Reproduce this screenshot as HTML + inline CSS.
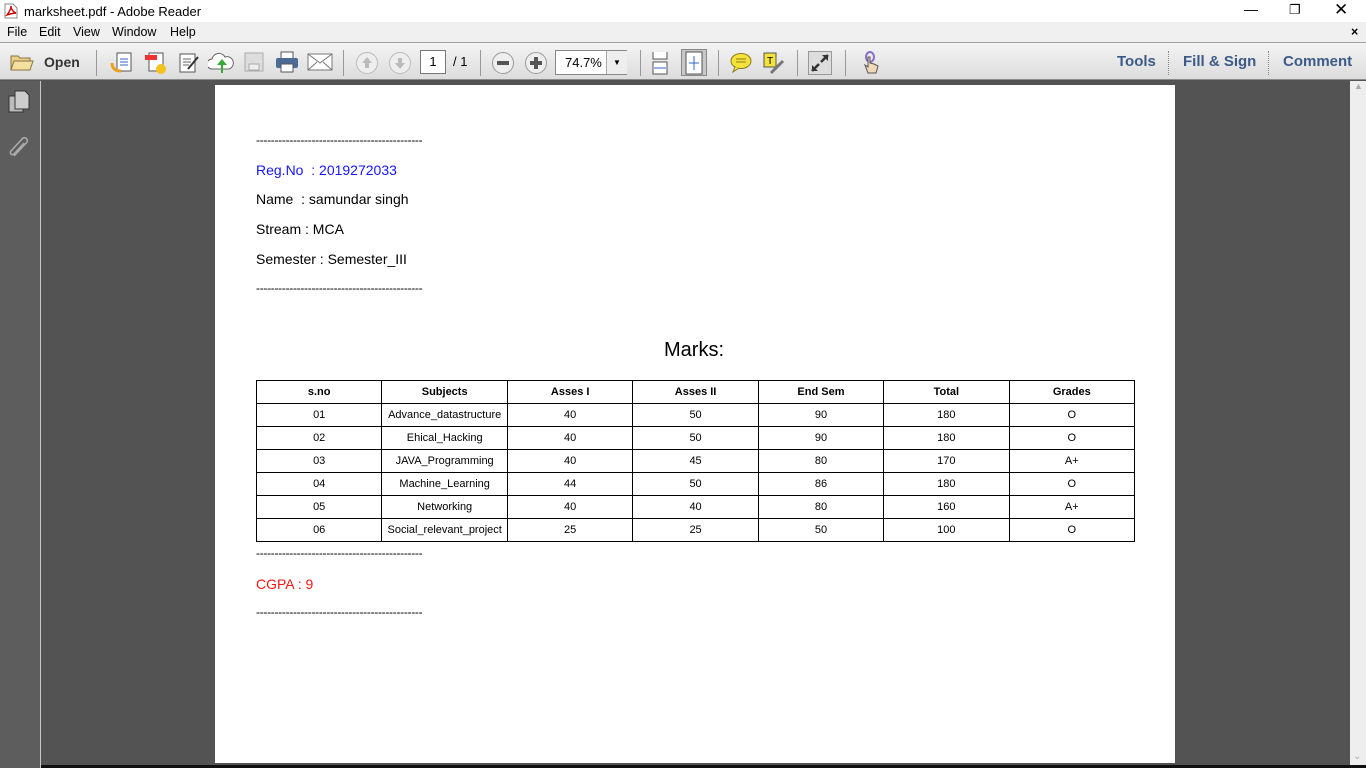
<!DOCTYPE html>
<html><head><meta charset="utf-8"><style>
*{margin:0;padding:0;box-sizing:border-box}
body{width:1366px;height:768px;overflow:hidden;font-family:"Liberation Sans",sans-serif;background:#535353;position:relative}
.abs{position:absolute}
#title{left:0;top:0;width:1366px;height:22px;background:#fff;font-size:13px;color:#000}
#menu{left:0;top:22px;width:1366px;height:20px;background:#f0f0f0;font-size:12.5px}
#menu span{position:absolute;top:3px}
#tb{left:0;top:42px;width:1366px;height:38px;background:linear-gradient(#f4f4f4,#dcdcdc);border-top:1px solid #a0a0a0;border-bottom:1px solid #8a8a8a}
.sep{position:absolute;top:7px;width:1px;height:26px;background:#999}
.ic{position:absolute}
#left{left:0;top:81px;width:41px;height:687px;background:#5d5d5d;border-right:1px solid #c8c8c8}
#page{left:215px;top:85px;width:960px;height:678px;background:#fff}
#sb{left:1350px;top:81px;width:16px;height:684px;background:#eee}
.t{position:absolute;font-size:14px;color:#000;left:41px}
.dash{position:absolute;left:41px;font-size:12px;color:#000;letter-spacing:-0.3px}
table{position:absolute;left:41px;top:295px;border-collapse:collapse;width:879px;font-size:11px}
td{border:1px solid #000;height:23px;text-align:center;width:125.6px;padding:0}
tr:first-child td{font-weight:bold}
.r{position:absolute;font-weight:bold;font-size:15px;color:#3c5a87;top:10px}
</style></head><body>
<div id="title" class="abs">
 <svg class="abs" style="left:4px;top:3px" width="14" height="16"><path d="M1 1h8l4 4v10H1z" fill="#fff" stroke="#888"/><path d="M3 12c3-4 4-7 4-9 0 3 2 6 5 7-3 0-6 1-9 2z" fill="none" stroke="#c00" stroke-width="1.4"/></svg>
 <span class="abs" style="left:24px;top:4px">marksheet.pdf - Adobe Reader</span>
 <span class="abs" style="left:1244px;top:1px;font-size:14px">—</span>
 <span class="abs" style="left:1289px;top:2px;font-size:13px">❐</span>
 <span class="abs" style="left:1334px;top:0px;font-size:17px">✕</span>
</div>
<div id="menu" class="abs"><span style="left:7px">File</span><span style="left:39px">Edit</span><span style="left:73px">View</span><span style="left:112px">Window</span><span style="left:170px">Help</span><span style="left:1351px;font-weight:bold">×</span></div>
<div id="tb" class="abs">
 <svg class="ic" style="left:10px;top:9px" width="24" height="20"><path d="M1 4h7l2 2h10v12H1z" fill="#e9cf88" stroke="#8a7440"/><path d="M1 18l3-9h19l-3 9z" fill="#f3dfa0" stroke="#8a7440"/></svg>
 <span class="abs" style="left:44px;top:11px;font-weight:bold;font-size:14px;color:#333">Open</span>
 <div class="sep" style="left:96px"></div>
 <svg class="ic" style="left:110px;top:8px" width="24" height="24"><rect x="7" y="2" width="14" height="18" fill="#fff" stroke="#555"/><path d="M10 8h8M10 11h8M10 14h8" stroke="#36c"/><path d="M2 12c0 6 4 8 9 8" stroke="#e8a21c" stroke-width="3" fill="none"/></svg>
 <svg class="ic" style="left:144px;top:8px" width="24" height="24"><rect x="5" y="2" width="14" height="18" fill="#fff" stroke="#555"/><rect x="1" y="4" width="12" height="5" fill="#e33"/><circle cx="17" cy="18" r="5" fill="#f3c21c"/></svg>
 <svg class="ic" style="left:178px;top:8px" width="24" height="24"><rect x="2" y="3" width="15" height="18" fill="#fff" stroke="#555"/><path d="M5 8h8M5 11h8M5 14h6" stroke="#666"/><path d="M10 18l10-12" stroke="#333" stroke-width="2"/></svg>
 <svg class="ic" style="left:208px;top:8px" width="26" height="24"><path d="M4 18a5 5 0 010-10 7 7 0 0113-2 5 5 0 014 12z" fill="#fff" stroke="#666"/><path d="M13 22v-8h-4l5-6 5 6h-4v8z" fill="#3a3"/></svg>
 <svg class="ic" style="left:244px;top:9px" width="20" height="20"><rect x="1" y="1" width="18" height="18" fill="#ddd" stroke="#aaa"/><rect x="5" y="12" width="10" height="6" fill="#eee" stroke="#aaa"/></svg>
 <svg class="ic" style="left:275px;top:8px" width="24" height="22"><rect x="6" y="1" width="12" height="7" fill="#fff" stroke="#555"/><rect x="1" y="7" width="22" height="10" rx="2" fill="#4c6b96"/><rect x="6" y="13" width="12" height="8" fill="#fff" stroke="#555"/></svg>
 <svg class="ic" style="left:307px;top:10px" width="26" height="18"><rect x="1" y="1" width="24" height="16" fill="#fff" stroke="#777"/><path d="M1 1l12 9 12-9M1 17l9-8M25 17l-9-8" stroke="#777" fill="none"/></svg>
 <div class="sep" style="left:343px"></div>
 <svg class="ic" style="left:355px;top:8px" width="24" height="24"><circle cx="12" cy="12" r="10.5" fill="#eee" stroke="#bbb"/><path d="M12 6l-5 6h3v5h4v-5h3z" fill="#bbb"/></svg>
 <svg class="ic" style="left:388px;top:8px" width="24" height="24"><circle cx="12" cy="12" r="10.5" fill="#eee" stroke="#bbb"/><path d="M12 18l-5-6h3V7h4v5h3z" fill="#bbb"/></svg>
 <div class="abs" style="left:420px;top:7px;width:26px;height:24px;background:#fff;border:1px solid #777;font-size:13px;text-align:center;line-height:22px">1</div>
 <span class="abs" style="left:453px;top:11px;font-size:13px">/ 1</span>
 <div class="sep" style="left:480px"></div>
 <svg class="ic" style="left:491px;top:8px" width="24" height="24"><circle cx="12" cy="12" r="10.5" fill="#eee" stroke="#999"/><rect x="6" y="10" width="12" height="4" fill="#555"/></svg>
 <svg class="ic" style="left:524px;top:8px" width="24" height="24"><circle cx="12" cy="12" r="10.5" fill="#eee" stroke="#999"/><path d="M6 10h4V6h4v4h4v4h-4v4h-4v-4H6z" fill="#555"/></svg>
 <div class="abs" style="left:555px;top:7px;width:72px;height:25px;background:#fff;border:1px solid #888;font-size:13px;line-height:23px;padding-left:9px">74.7%<div class="abs" style="left:50px;top:0;width:21px;height:23px;background:#eee;border-left:1px solid #aaa;font-size:8px;text-align:center">▼</div></div>
 <div class="sep" style="left:640px"></div>
 <svg class="ic" style="left:650px;top:8px" width="20" height="24"><path d="M3 1v7h14V1M3 23V11h14v12z" fill="#fff" stroke="#555"/><path d="M4 17h12" stroke="#36c"/></svg>
 <div class="abs" style="left:681px;top:6px;width:26px;height:27px;background:#c8c8c8;border:1px solid #888"></div>
 <svg class="ic" style="left:684px;top:8px" width="20" height="24"><rect x="2" y="1" width="16" height="22" fill="#fff" stroke="#555"/><path d="M10 5v14M5 12h10" stroke="#36c"/></svg>
 <div class="sep" style="left:718px"></div>
 <svg class="ic" style="left:729px;top:9px" width="24" height="22"><ellipse cx="12" cy="9" rx="10" ry="7.5" fill="#f6e33a" stroke="#8a7a20"/><path d="M6 15l-2 5 6-4" fill="#f6e33a" stroke="#8a7a20"/><path d="M7 7h10M7 10h10" stroke="#8a7a20"/></svg>
 <svg class="ic" style="left:762px;top:8px" width="24" height="24"><rect x="2" y="2" width="12" height="14" fill="#f6e33a" stroke="#555"/><text x="5" y="13" font-size="10" font-family="Liberation Sans">T</text><path d="M9 22l12-12" stroke="#777" stroke-width="3"/></svg>
 <div class="sep" style="left:797px"></div>
 <div class="abs" style="left:808px;top:8px;width:24px;height:24px;background:#ddd;border:1px solid #999"></div>
 <svg class="ic" style="left:810px;top:10px" width="20" height="20"><path d="M2 18l7-7M18 2l-7 7" stroke="#333" stroke-width="2.5"/><path d="M2 12v6h6zM18 8V2h-6z" fill="#333"/></svg>
 <div class="sep" style="left:845px"></div>
 <svg class="ic" style="left:861px;top:8px" width="20" height="24"><ellipse cx="9" cy="6" rx="4" ry="5" fill="none" stroke="#8a6dc9" stroke-width="2"/><path d="M7 6v10l-3-2 3 8h8l2-7-4-2-4-1V6z" fill="#f0d8b8" stroke="#555"/></svg>
 <span class="r" style="left:1117px">Tools</span>
 <div class="abs" style="left:1168px;top:8px;height:24px;border-left:1px dotted #888"></div>
 <span class="r" style="left:1183px">Fill &amp; Sign</span>
 <div class="abs" style="left:1268px;top:8px;height:24px;border-left:1px dotted #888"></div>
 <span class="r" style="left:1283px">Comment</span>
</div>
<div id="left" class="abs">
 <svg class="abs" style="left:8px;top:9px" width="24" height="24"><rect x="1" y="6" width="14" height="16" fill="#bbb" stroke="#333"/><path d="M7 1h10l4 4v14H7z" fill="#ccc" stroke="#333"/></svg>
 <svg class="abs" style="left:8px;top:55px" width="24" height="24"><path d="M6 20L19 6a3 3 0 00-4-4L3 15a2 2 0 003 3l10-11" fill="none" stroke="#aaa" stroke-width="1.6"/></svg>
</div>
<div class="abs" style="left:41px;top:765px;width:1325px;height:3px;background:#111"></div>
<div id="sb" class="abs"><span class="abs" style="left:4px;top:0;font-size:9px;color:#aaa">▲</span><span class="abs" style="left:3px;top:670px;font-size:10px;color:#aaa">⌄</span></div>
<div id="page" class="abs">
 <div class="dash" style="top:48px">---------------------------------------------</div>
 <div class="t" style="top:77px;color:#1515ff">Reg.No&nbsp; : 2019272033</div>
 <div class="t" style="top:106px">Name&nbsp; : samundar singh</div>
 <div class="t" style="top:136px">Stream : MCA</div>
 <div class="t" style="top:166px">Semester : Semester_III</div>
 <div class="dash" style="top:196px">---------------------------------------------</div>
 <div class="abs" style="left:449px;top:254px;font-size:20px">Marks:</div>
 <table>
  <tr><td>s.no</td><td>Subjects</td><td>Asses I</td><td>Asses II</td><td>End Sem</td><td>Total</td><td>Grades</td></tr>
  <tr><td>01</td><td>Advance_datastructure</td><td>40</td><td>50</td><td>90</td><td>180</td><td>O</td></tr>
  <tr><td>02</td><td>Ehical_Hacking</td><td>40</td><td>50</td><td>90</td><td>180</td><td>O</td></tr>
  <tr><td>03</td><td>JAVA_Programming</td><td>40</td><td>45</td><td>80</td><td>170</td><td>A+</td></tr>
  <tr><td>04</td><td>Machine_Learning</td><td>44</td><td>50</td><td>86</td><td>180</td><td>O</td></tr>
  <tr><td>05</td><td>Networking</td><td>40</td><td>40</td><td>80</td><td>160</td><td>A+</td></tr>
  <tr><td>06</td><td>Social_relevant_project</td><td>25</td><td>25</td><td>50</td><td>100</td><td>O</td></tr>
 </table>
 <div class="dash" style="top:461px">---------------------------------------------</div>
 <div class="t" style="top:491px;color:#ff1515">CGPA : 9</div>
 <div class="dash" style="top:520px">---------------------------------------------</div>
</div>
</body></html>
